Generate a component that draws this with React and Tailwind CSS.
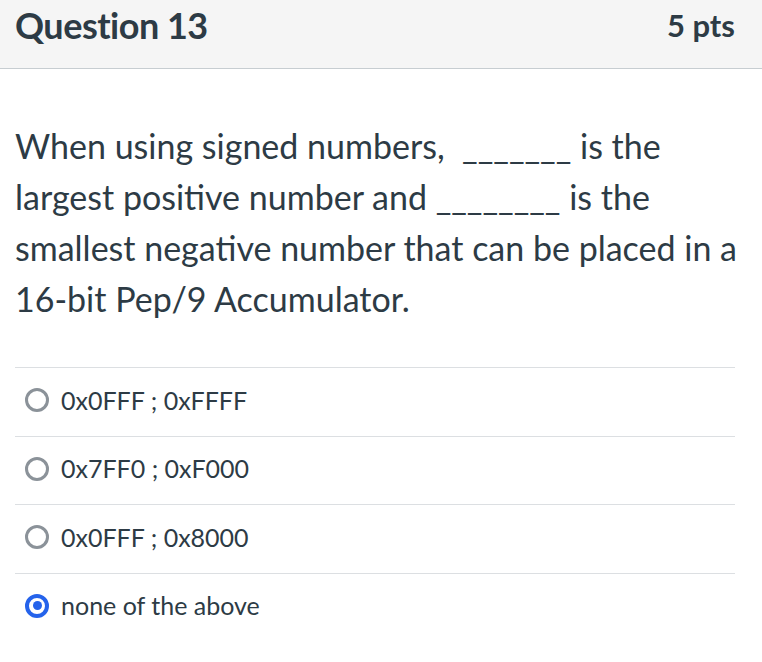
export default function App() {
  const opts = [
    { t: "0x0FFF ; 0xFFFF", sel: false },
    { t: "0x7FF0 ; 0xF000", sel: false },
    { t: "0x0FFF ; 0x8000", sel: false },
    { t: "none of the above", sel: true },
  ];
  return (
    <div className="w-[762px] h-[662px] bg-white text-[#2d3b45] overflow-hidden" style={{ fontFamily: "Lato, 'Noto Sans', sans-serif" }}>
      <div className="h-[69px] bg-[#f5f5f5] border-b border-[#c7cdd1] flex items-center justify-between pl-[15px] pr-[27px] pb-[18px]">
        <div className="text-[36px] leading-[40px] font-bold tracking-[-0.5px]">Question 13</div>
        <div className="text-[31px] leading-[40px] font-bold">5 pts</div>
      </div>
      <div className="pl-[15px] pr-[27px]">
        <div className="pt-[51px] -mr-[6px] text-[34px] leading-[51px]">
          When using signed numbers,&nbsp; _______ is the largest positive number and ________ is the smallest negative number that can be placed in a 16-bit Pep/9 Accumulator.
        </div>
        <div className="mt-[43px]">
          {opts.map((o, i) => (
            <div key={i} className="h-[68.5px] border-t border-[#dcdfe2] flex items-center pl-[10px] pb-[3px]">
              {o.sel ? (
                <span className="w-[24px] h-[24px] rounded-full border-[4px] border-[#2563eb] flex items-center justify-center">
                  <span className="w-[9px] h-[9px] rounded-full bg-[#2563eb]" />
                </span>
              ) : (
                <span className="w-[24px] h-[24px] rounded-full border-[3px] border-[#8b9299]" />
              )}
              <span className="ml-[12px] text-[25px]">{o.t}</span>
            </div>
          ))}
        </div>
      </div>
    </div>
  );
}
